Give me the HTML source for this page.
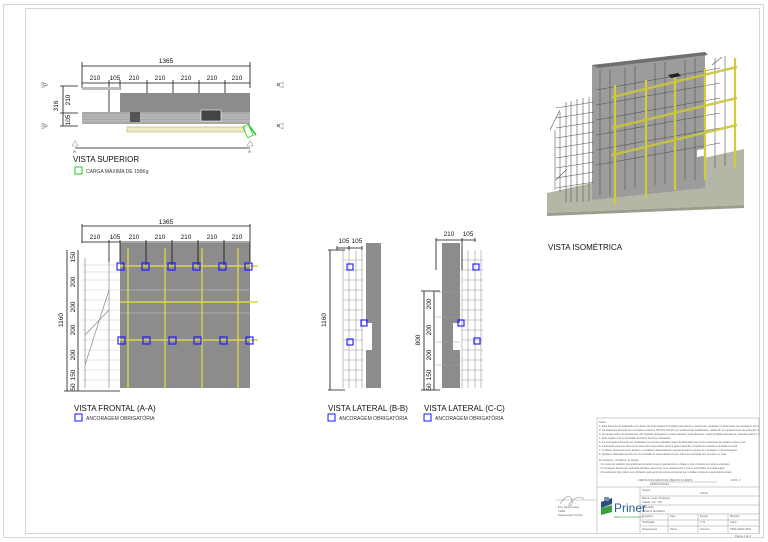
<!DOCTYPE html>
<html><head><meta charset="utf-8"><style>
html,body{margin:0;padding:0;background:#fff;width:768px;height:542px;overflow:hidden}
svg{display:block;font-family:"Liberation Sans",sans-serif}
</style></head><body>
<svg width="768" height="542" viewBox="0 0 768 542" xmlns="http://www.w3.org/2000/svg">
<defs><clipPath id="tb"><rect x="597" y="418" width="162" height="115"/></clipPath></defs>
<rect x="3.5" y="4.5" width="760" height="533" fill="none" stroke="#d6d6d6"/>
<rect x="25.5" y="8.5" width="734" height="525" fill="none" stroke="#d6d6d6"/>

<!-- VISTA SUPERIOR -->
<g stroke="#111" stroke-width="0.8" fill="none">
<line x1="82" y1="66" x2="250" y2="66"/>
<line x1="82" y1="62" x2="82" y2="88"/><line x1="250" y1="62" x2="250" y2="88"/>
<line x1="82" y1="83" x2="250" y2="83"/>
<line x1="109" y1="80" x2="109" y2="115"/><line x1="120" y1="80" x2="120" y2="90"/>
<line x1="147" y1="80" x2="147" y2="115"/><line x1="173" y1="80" x2="173" y2="115"/>
<line x1="199" y1="80" x2="199" y2="115"/><line x1="225" y1="80" x2="225" y2="115"/>
<line x1="63" y1="86" x2="63" y2="126"/><line x1="60" y1="86" x2="78" y2="86"/>
<line x1="60" y1="113" x2="78" y2="113"/><line x1="60" y1="126" x2="78" y2="126"/>
<line x1="75" y1="148" x2="250" y2="148"/>
</g>
<g font-size="6.5" fill="#111" text-anchor="middle">
<text x="166" y="63">1365</text>
<text x="95" y="80">210</text><text x="115" y="80">105</text><text x="134" y="80">210</text>
<text x="160" y="80">210</text><text x="186" y="80">210</text><text x="212" y="80">210</text><text x="237" y="80">210</text>
<text transform="translate(58,106) rotate(-90)">316</text>
<text transform="translate(70,100) rotate(-90)">210</text>
<text transform="translate(70,120) rotate(-90)">105</text>
</g>
<rect x="120" y="93" width="130" height="21" fill="#8c8c8c"/>
<rect x="82" y="87" width="38" height="3" fill="#bbb"/>
<rect x="82" y="112" width="168" height="12" fill="#a8a8a8"/>
<g stroke="#ddd" stroke-width="0.5"><line x1="82" y1="115" x2="250" y2="115"/><line x1="82" y1="118" x2="250" y2="118"/><line x1="82" y1="121" x2="250" y2="121"/></g>
<rect x="201" y="110" width="20" height="11" fill="#444" stroke="#fff" stroke-width="0.6"/>
<rect x="130" y="112" width="10" height="10" fill="#555"/>
<rect x="127" y="127" width="118" height="5" fill="#ecebc5" stroke="#b9b56a" stroke-width="0.6"/>
<path d="M248 124 L256 135" stroke="#2c2" stroke-width="1.5"/>
<rect x="245" y="125" width="6" height="12" fill="none" stroke="#3c3" stroke-width="0.8" transform="rotate(-25 248 131)"/>
<g fill="none" stroke="#999" stroke-width="0.6">
<path d="M42 82 l6 3 l-6 3 z"/><path d="M42 123 l6 3 l-6 3 z"/>
<path d="M283 82 l-6 3 l6 3 z"/><path d="M283 123 l-6 3 l6 3 z"/>
<path d="M72 146 l3 -5 l3 5 z"/><path d="M247 146 l3 -5 l3 5 z"/>
</g>
<g font-size="4.5" fill="#333"><text x="43" y="86">C</text><text x="43" y="127">C</text><text x="277" y="86">B</text><text x="277" y="127">B</text><text x="73" y="153">A</text><text x="248" y="153">A</text></g>
<text x="73" y="162" font-size="8" fill="#111">VISTA SUPERIOR</text>
<rect x="75" y="167" width="7" height="7" fill="none" stroke="#2c2" stroke-width="1"/>
<text x="86" y="173" font-size="5" fill="#333">CARGA MÁXIMA DE 150Kg</text>

<!-- VISTA FRONTAL -->
<rect x="120" y="243" width="130" height="145" fill="#8c8c8c"/>
<g stroke="#ccc" stroke-width="0.6">
<line x1="82" y1="265" x2="120" y2="265"/><line x1="82" y1="272" x2="120" y2="272"/><line x1="82" y1="280" x2="120" y2="280"/>
<line x1="82" y1="290" x2="120" y2="290"/><line x1="82" y1="300" x2="120" y2="300"/><line x1="82" y1="310" x2="120" y2="310"/>
<line x1="82" y1="320" x2="120" y2="320"/><line x1="82" y1="330" x2="120" y2="330"/><line x1="82" y1="340" x2="120" y2="340"/>
<line x1="82" y1="350" x2="120" y2="350"/><line x1="82" y1="360" x2="120" y2="360"/><line x1="82" y1="370" x2="120" y2="370"/><line x1="82" y1="380" x2="120" y2="380"/>
<line x1="120" y1="290" x2="250" y2="290"/><line x1="120" y1="313" x2="250" y2="313"/>
</g>
<g stroke="#888" stroke-width="0.7" fill="none">
<line x1="85" y1="258" x2="85" y2="388"/><line x1="109" y1="258" x2="109" y2="388"/>
<path d="M85 365 L109 290 M85 335 L109 310"/>
</g>
<g stroke="#d9d34a" stroke-width="1.4">
<line x1="128" y1="248" x2="128" y2="388"/><line x1="165" y1="248" x2="165" y2="388"/>
<line x1="202" y1="248" x2="202" y2="388"/><line x1="238" y1="248" x2="238" y2="388"/>
<line x1="120" y1="266" x2="258" y2="266"/><line x1="120" y1="302" x2="258" y2="302"/><line x1="120" y1="340" x2="258" y2="340"/>
</g>
<g stroke="#111" stroke-width="0.8" fill="none">
<line x1="82" y1="226" x2="250" y2="226"/>
<line x1="82" y1="224" x2="82" y2="243"/><line x1="250" y1="224" x2="250" y2="262"/>
<line x1="82" y1="242" x2="250" y2="242"/>
<line x1="109" y1="240" x2="109" y2="262"/><line x1="120" y1="240" x2="120" y2="262"/>
<line x1="146" y1="240" x2="146" y2="265"/><line x1="172" y1="240" x2="172" y2="265"/>
<line x1="198" y1="240" x2="198" y2="265"/><line x1="224" y1="240" x2="224" y2="265"/>
<line x1="67" y1="250" x2="67" y2="391"/><line x1="78" y1="250" x2="78" y2="391"/>
<line x1="64" y1="391" x2="120" y2="391"/>
</g>
<g font-size="6.5" fill="#111" text-anchor="middle">
<text x="166" y="224">1365</text>
<text x="95" y="239">210</text><text x="115" y="239">105</text><text x="134" y="239">210</text>
<text x="160" y="239">210</text><text x="186" y="239">210</text><text x="212" y="239">210</text><text x="237" y="239">210</text>
<text transform="translate(63,320) rotate(-90)">1160</text>
<text transform="translate(75,257) rotate(-90)">150</text><text transform="translate(75,282) rotate(-90)">200</text>
<text transform="translate(75,307) rotate(-90)">200</text><text transform="translate(75,330) rotate(-90)">200</text>
<text transform="translate(75,355) rotate(-90)">200</text><text transform="translate(75,375) rotate(-90)">150</text>
<text transform="translate(75,387) rotate(-90)">50</text>
</g>
<g fill="none" stroke="#1515ff" stroke-width="1.1">
<rect x="117" y="263" width="7" height="7"/><rect x="142" y="263" width="7" height="7"/><rect x="168" y="263" width="7" height="7"/>
<rect x="193" y="263" width="7" height="7"/><rect x="219" y="263" width="7" height="7"/><rect x="245" y="263" width="7" height="7"/>
<rect x="118" y="337" width="7" height="7"/><rect x="143" y="337" width="7" height="7"/><rect x="169" y="337" width="7" height="7"/>
<rect x="194" y="337" width="7" height="7"/><rect x="220" y="337" width="7" height="7"/><rect x="246" y="337" width="7" height="7"/>
</g>
<text x="74" y="411" font-size="8" fill="#111">VISTA FRONTAL (A-A)</text>
<rect x="75" y="414" width="7" height="7" fill="none" stroke="#1515ff" stroke-width="1"/>
<text x="86" y="420" font-size="5" fill="#333">ANCORAGEM OBRIGATÓRIA</text>

<!-- LATERAL B-B -->
<rect x="366" y="243" width="15" height="145" fill="#8c8c8c"/>
<rect x="366" y="323" width="6" height="27" fill="#fff"/>
<g stroke="#999" stroke-width="0.6" fill="none">
<line x1="343" y1="250" x2="343" y2="388"/><line x1="349" y1="250" x2="349" y2="388"/><line x1="356" y1="250" x2="356" y2="388"/><line x1="362" y1="250" x2="362" y2="388"/>
<path d="M343 260h20M343 270h20M343 280h20M343 290h20M343 300h20M343 310h20M343 320h20M343 330h20M343 340h20M343 350h20M343 360h20M343 370h20M343 380h20"/>
</g>
<g stroke="#111" stroke-width="0.8" fill="none">
<line x1="337" y1="248" x2="362" y2="248"/><line x1="337" y1="246" x2="337" y2="250"/><line x1="349" y1="246" x2="349" y2="250"/><line x1="362" y1="246" x2="362" y2="250"/>
<line x1="330" y1="250" x2="330" y2="390"/><line x1="328" y1="250" x2="345" y2="250"/><line x1="328" y1="390" x2="345" y2="390"/>
</g>
<g font-size="6.5" fill="#111" text-anchor="middle"><text x="344" y="243">105</text><text x="357" y="243">105</text>
<text transform="translate(326,320) rotate(-90)">1160</text></g>
<g fill="none" stroke="#1515ff" stroke-width="1.1">
<rect x="347" y="264" width="6" height="6"/><rect x="361" y="320" width="6" height="6"/><rect x="347" y="339" width="6" height="6"/>
</g>
<text x="328" y="411" font-size="8" fill="#111">VISTA LATERAL (B-B)</text>
<rect x="328" y="414" width="7" height="7" fill="none" stroke="#1515ff" stroke-width="1"/>
<text x="339" y="420" font-size="5" fill="#333">ANCORAGEM OBRIGATÓRIA</text>

<!-- LATERAL C-C -->
<rect x="442" y="243" width="18" height="145" fill="#8c8c8c"/>
<rect x="453" y="323" width="7" height="27" fill="#fff"/>
<g stroke="#999" stroke-width="0.6" fill="none">
<line x1="462" y1="250" x2="462" y2="388"/><line x1="468" y1="250" x2="468" y2="388"/><line x1="475" y1="250" x2="475" y2="388"/><line x1="481" y1="250" x2="481" y2="388"/>
<path d="M462 260h21M462 270h21M462 280h21M462 290h21M462 300h21M462 310h21M462 320h21M462 330h21M462 340h21M462 350h21M462 360h21M462 370h21M462 380h21"/>
<path d="M436 292h24M436 317h24M436 342h24M436 365h24"/>
</g>
<g stroke="#111" stroke-width="0.8" fill="none">
<line x1="436" y1="240" x2="475" y2="240"/><line x1="436" y1="238" x2="436" y2="270"/><line x1="462" y1="238" x2="462" y2="270"/><line x1="475" y1="238" x2="475" y2="242"/>
<line x1="424" y1="291" x2="424" y2="390"/><line x1="434" y1="291" x2="434" y2="390"/><line x1="421" y1="291" x2="440" y2="291"/><line x1="421" y1="390" x2="440" y2="390"/>
</g>
<g font-size="6.5" fill="#111" text-anchor="middle"><text x="449" y="236">210</text><text x="468" y="236">105</text>
<text transform="translate(420,340) rotate(-90)">800</text>
<text transform="translate(431,304) rotate(-90)">200</text><text transform="translate(431,330) rotate(-90)">200</text>
<text transform="translate(431,355) rotate(-90)">200</text><text transform="translate(431,375) rotate(-90)">150</text><text transform="translate(431,387) rotate(-90)">50</text></g>
<g fill="none" stroke="#1515ff" stroke-width="1.1">
<rect x="473" y="264" width="6" height="6"/><rect x="458" y="320" width="6" height="6"/><rect x="474" y="338" width="6" height="6"/>
</g>
<text x="424" y="411" font-size="8" fill="#111">VISTA LATERAL (C-C)</text>
<rect x="424" y="414" width="7" height="7" fill="none" stroke="#1515ff" stroke-width="1"/>
<text x="435" y="420" font-size="5" fill="#333">ANCORAGEM OBRIGATÓRIA</text>

<!-- ISOMETRIC -->
<polygon points="547,193 744,149 744,205 547,213" fill="#b4b6a6"/>
<polygon points="547,213 744,205 744,208 547,216" fill="#9a9c8c"/>
<polygon points="592,65 705,52 705,188 592,200" fill="#9c9c9c"/>
<polygon points="592,65 705,52 708,55 598,68" fill="#6f6f6f"/>
<polygon points="697,150 744,142 744,149 697,157" fill="#fff"/>
<g stroke="#555" stroke-width="0.6" fill="none">
<path d="M566 102v100M571 101v101M577 99v103M583 98v104M589 97v104M560 112v80M555 130v60"/>
<path d="M556 108l38 -6M556 118l38 -6M556 128l38 -6M556 138l38 -6M556 148l38 -6M556 158l38 -6M556 168l38 -6M556 178l38 -6M556 188l38 -6"/>
<path d="M596 90l124 -22M596 105l124 -22M596 120l124 -22M596 135l124 -22M596 150l124 -22M596 165l124 -22"/>
<path d="M600 70v125M610 70v125M625 68v122M635 66v122M655 63v122M665 62v122M685 60v120M695 58v122M715 58v110M725 56v110"/>
<path d="M560 110l-10 20M556 180l10 -10M712 65l10 -8"/>
</g>
<g stroke="#d2cc3a" stroke-width="2.2" fill="none">
<path d="M615 85v120M646 80v118M675 75v115M705 68v112M735 58v110"/>
</g>
<g stroke="#cbc53a" stroke-width="2.5" fill="none" opacity="0.9">
<path d="M612 97l125 -30M612 128l125 -30M612 155l125 -30"/>
</g>
<path d="M668 75l10 -2 l3 3 l-10 2z" fill="#222"/>
<text x="548" y="250" font-size="8" fill="#111">VISTA ISOMÉTRICA</text>

<!-- TITLE BLOCK -->
<g stroke="#999" stroke-width="0.5" fill="none">
<line x1="597" y1="418" x2="597" y2="533"/><line x1="759" y1="418" x2="759" y2="533"/>
<line x1="597" y1="418" x2="759" y2="418"/>
<line x1="597" y1="487" x2="759" y2="487"/>
<line x1="640" y1="487" x2="640" y2="533"/>
<line x1="640" y1="496" x2="759" y2="496"/><line x1="640" y1="505" x2="759" y2="505"/><line x1="640" y1="514" x2="759" y2="514"/>
<line x1="640" y1="520" x2="759" y2="520"/><line x1="640" y1="526" x2="759" y2="526"/>
<line x1="668" y1="514" x2="668" y2="533"/><line x1="698" y1="514" x2="698" y2="533"/><line x1="728" y1="514" x2="728" y2="533"/>
<line x1="650" y1="482" x2="717" y2="482"/>
<line x1="556" y1="500" x2="596" y2="500"/>
</g>
<g font-size="2.6" fill="#666" clip-path="url(#tb)">
<text x="599" y="423">Notas:</text>
<text x="599" y="427">1. Este desenho foi elaborado com base nas informações fornecidas pelo cliente e deverá ser verificado no local antes da montagem dos andaimes.</text>
<text x="599" y="431">2. Os andaimes deverão ser montados conforme NR-18 e NR-35, por profissionais qualificados, utilizando os equipamentos de proteção individual.</text>
<text x="599" y="435">3. As cargas sobre as plataformas não deverão ultrapassar o limite indicado neste desenho, sendo proibido acúmulo de materiais sobre o piso.</text>
<text x="599" y="439">4. Este projeto é de propriedade da Priner Serviços Industriais.</text>
<text x="599" y="443">5. As ancoragens deverão ser instaladas nos pontos indicados antes da liberação dos níveis superiores do andaime para o uso.</text>
<text x="599" y="447">6. A liberação para uso deverá ser feita pelo responsável técnico após inspeção completa da estrutura montada no local.</text>
<text x="599" y="451">7. O cliente deverá fornecer acesso e condições adequadas de segurança para a equipe de montagem e desmontagem.</text>
<text x="599" y="455">8. Qualquer alteração deverá ser comunicada ao responsável técnico antes da execução dos serviços no local.</text>
<text x="599" y="461">Do andaime, considerar as cargas:</text>
<text x="599" y="465">- Os níveis de trabalho dos andaimes deverão possuir guarda-corpo, rodapé e piso completo em toda a extensão.</text>
<text x="599" y="469">- A montagem deverá ser realizada de baixo para cima, com nivelamento e prumo verificados em cada etapa.</text>
<text x="599" y="473">- Os andaimes não podem ser utilizados para apoio de outras estruturas sem análise prévia do responsável técnico.</text>
<text x="638" y="481">CIENTE DOS DADOS DE OBRA DO CLIENTE</text><text x="731" y="481">DATA: / /</text>
<text x="650" y="485">RESPONSÁVEL</text>
<text x="642" y="491">Projeto:</text><text x="700" y="494">Cliente</text>
<text x="642" y="499">Manut. Local / Endereço</text><text x="642" y="503">Cidade / UF - BR</text>
<text x="642" y="508">Descrição:</text><text x="642" y="512">Andaime fachadeiro</text>
<text x="642" y="517">Projetista</text><text x="670" y="517">Data</text><text x="700" y="517">Escala</text><text x="730" y="517">Revisão</text>
<text x="642" y="523">Verificação</text><text x="700" y="523">1:75</text><text x="730" y="523">Folha</text>
<text x="642" y="530">Responsável</text><text x="670" y="530">Priner</text><text x="700" y="530">Número</text><text x="730" y="530">PRIN-ANDA-0001</text>
</g>
<g font-size="2.6" fill="#666">
<text x="735" y="537">Página 1 de 1</text>
<text x="558" y="508">Eng. Responsável</text><text x="558" y="512">CREA</text><text x="558" y="516">Responsável Técnico</text>
</g>
<path d="M560 504c5 -8 10 -10 12 -4s-6 8 -2 3s10 -8 14 -4" stroke="#888" stroke-width="0.6" fill="none"/>
<polygon points="601,502 612,498 612,504 601,508" fill="#2c4f8a"/>
<polygon points="601,508 612,505 612,512 601,515" fill="#3aa040"/>
<rect x="604" y="497" width="5" height="4" fill="#7a8fa8"/>
<text x="614" y="512" font-size="12" fill="#2a5d92">Priner</text>
<text x="614" y="518" font-size="2.5" fill="#3aa040">SERVIÇOS INDUSTRIAIS</text>
</svg>
</body></html>
